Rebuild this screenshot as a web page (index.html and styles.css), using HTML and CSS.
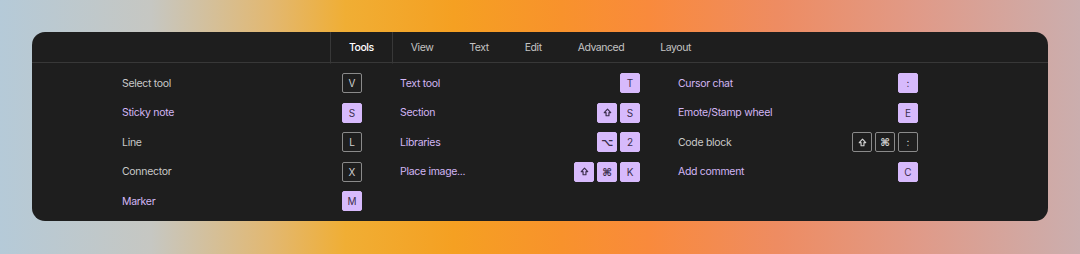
FILE: index.html
```html
<!DOCTYPE html>
<html lang="en">
<head>
  <meta charset="UTF-8">
  <title>Keyboard shortcuts</title>
  <link rel="stylesheet" href="styles.css">
</head>
<body>
  <div class="panel">
    <div class="tabs">
      <div class="tab active">Tools</div>
      <div class="tab">View</div>
      <div class="tab">Text</div>
      <div class="tab">Edit</div>
      <div class="tab">Advanced</div>
      <div class="tab">Layout</div>
    </div>
    <div class="grid">
      <div class="col">
        <div class="row"><span class="label">Select tool</span><span class="keys"><kbd>V</kbd></span></div>
        <div class="row hl"><span class="label">Sticky note</span><span class="keys"><kbd>S</kbd></span></div>
        <div class="row"><span class="label">Line</span><span class="keys"><kbd>L</kbd></span></div>
        <div class="row"><span class="label">Connector</span><span class="keys"><kbd>X</kbd></span></div>
        <div class="row hl"><span class="label">Marker</span><span class="keys"><kbd>M</kbd></span></div>
      </div>
      <div class="col">
        <div class="row hl"><span class="label">Text tool</span><span class="keys"><kbd>T</kbd></span></div>
        <div class="row hl"><span class="label">Section</span><span class="keys"><kbd><svg class="shift" viewBox="0 0 10 10"><path d="M5 1.2 L8.6 5.2 H6.6 V8.6 H3.4 V5.2 H1.4 Z"/></svg></kbd><kbd>S</kbd></span></div>
        <div class="row hl"><span class="label">Libraries</span><span class="keys"><kbd class="sym">⌥</kbd><kbd>2</kbd></span></div>
        <div class="row hl"><span class="label">Place image...</span><span class="keys"><kbd><svg class="shift" viewBox="0 0 10 10"><path d="M5 1.2 L8.6 5.2 H6.6 V8.6 H3.4 V5.2 H1.4 Z"/></svg></kbd><kbd class="sym">⌘</kbd><kbd>K</kbd></span></div>
      </div>
      <div class="col">
        <div class="row hl"><span class="label">Cursor chat</span><span class="keys"><kbd>:</kbd></span></div>
        <div class="row hl"><span class="label">Emote/Stamp wheel</span><span class="keys"><kbd>E</kbd></span></div>
        <div class="row"><span class="label">Code block</span><span class="keys"><kbd><svg class="shift" viewBox="0 0 10 10"><path d="M5 1.2 L8.6 5.2 H6.6 V8.6 H3.4 V5.2 H1.4 Z"/></svg></kbd><kbd class="sym">⌘</kbd><kbd>:</kbd></span></div>
        <div class="row hl"><span class="label">Add comment</span><span class="keys"><kbd>C</kbd></span></div>
      </div>
    </div>
  </div>
</body>
</html>
```

FILE: styles.css
```css
* { box-sizing: border-box; }
html, body { height: 100%; }
body {
  margin: 0;
  padding: 32px;
  font-family: Inter, 'Noto Sans', sans-serif;
  background:
    linear-gradient(to right,
      #b5cad8 0%, #c6c7c2 14%, #e2b872 25%, #f0ae34 32%, #f5a022 42%,
      #f8922c 52%, #f98a3c 60%, #ee8c62 72%, #e09a88 85%, #cbaeae 100%);
}
.panel {
  width: 1016px;
  height: 189px;
  background: #1e1e1e;
  border-radius: 13px;
  overflow: hidden;
}
.tabs {
  display: flex;
  height: 31px;
  padding-left: 298px;
  border-bottom: 1px solid #383838;
}
.tab {
  padding: 0 17px;
  line-height: 31px;
  font-size: 10.5px;
  letter-spacing: -0.45px;
  color: #c4c4c4;
  border: 1px solid transparent;
  border-top: 0;
}
.tab.active {
  padding: 0 18px;
  color: #fff;
  font-weight: 500;
  border-color: #383838;
  border-bottom-color: #1e1e1e;
  margin-bottom: -1px;
  height: 32px;
}
.grid {
  display: grid;
  grid-template-columns: repeat(3, 240px);
  column-gap: 38px;
  padding: 5.5px 0 0 90px;
}
.row {
  display: flex;
  align-items: center;
  justify-content: space-between;
  height: 29.5px;
}
.label { font-size: 10.5px; letter-spacing: -0.3px; color: #c9c9c9; }
.row.hl .label { color: #d2b6f4; }
.keys { display: flex; gap: 3px; }
kbd {
  width: 20px;
  height: 20px;
  display: flex;
  align-items: center;
  justify-content: center;
  font-family: Inter, sans-serif;
  font-size: 10px;
  border-radius: 2px;
  border: 1px solid #8a8a8a;
  color: #d0d0d0;
}
kbd.sym { font-family: 'DejaVu Sans', sans-serif; font-size: 10.5px; font-weight: bold; }
.shift {
  width: 9px;
  height: 9px;
  fill: none;
  stroke: currentColor;
  stroke-width: 1.3;
  stroke-linejoin: round;
}
.row.hl kbd {
  background: #d7bafc;
  border-color: #d7bafc;
  color: #3b2e4c;
}
```
